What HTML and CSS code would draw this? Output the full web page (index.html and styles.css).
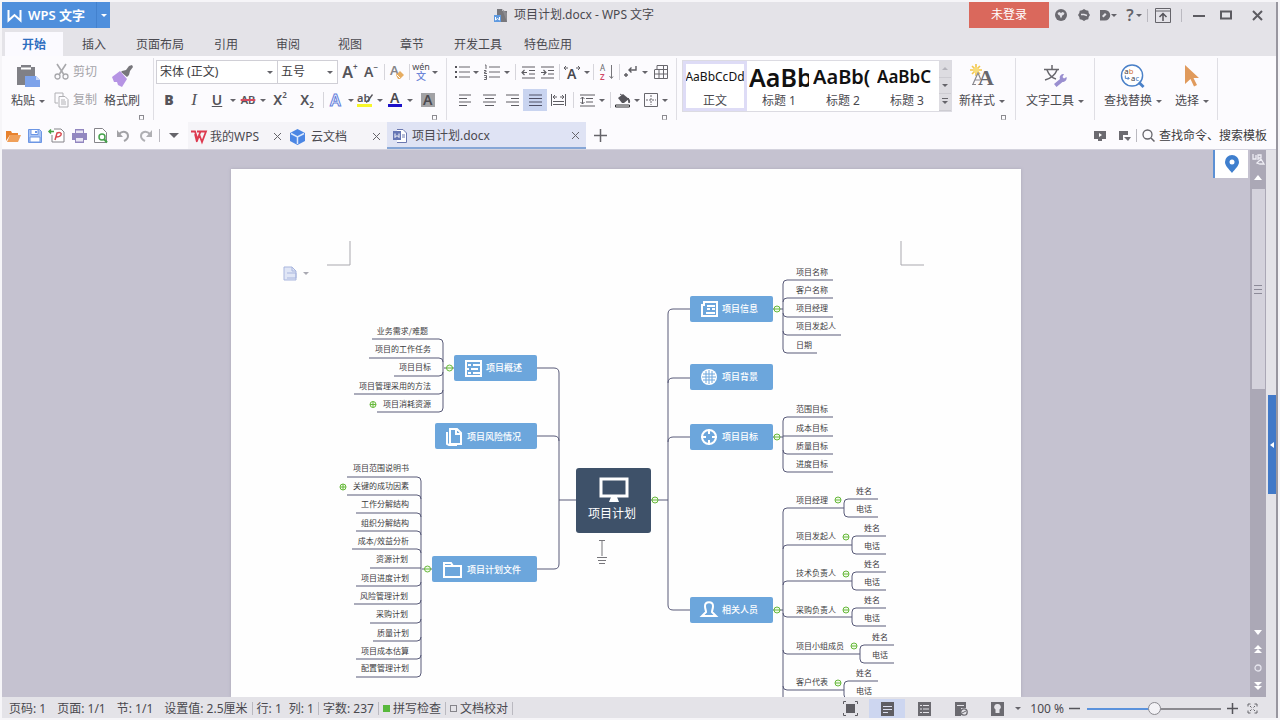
FILE: index.html
```html
<!DOCTYPE html>
<html lang="zh-CN">
<head>
<meta charset="utf-8">
<title>项目计划.docx - WPS 文字</title>
<link rel="stylesheet" href="styles.css">
</head>
<body>
<div class="window">
  <header class="titlebar">
    <button class="brand">
      <svg width="15" height="13" viewBox="0 0 15 13"><path d="M1.500 1v10.500l6-5.500 6 5.500V1" fill="none" stroke="#fff" stroke-width="2"/></svg>
      <span class="brand-name">WPS 文字</span><span class="brand-caret"><i class="caret"></i></span>
    </button>
    <div class="doc-title">
      <svg width="16" height="15" viewBox="0 0 16 15"><path d="M4 1h5v13H4zM9 3h5v11H9z" fill="#77777c"/><path d="M9 1l5 4v9" fill="#8b8b90"/><path d="M1 7h7v7H1z" fill="#5f9ae0"/><path d="M2.500 9v3l2-1.500 2 1.500V9" fill="none" stroke="#fff"/></svg>
      <span>项目计划.docx - WPS 文字</span>
    </div>
    <button class="login">未登录</button>
    <button class="w24" aria-label="皮肤"><svg width="12" height="12" viewBox="0 0 12 12"><circle cx="6" cy="6" r="6" fill="#6b6a70"/><path d="M2.500 4l2-1 1.500 1 1.500-1 2 1-1 2-1 .3L6 9.500 4.500 6.300l-1-.3z" fill="#e4e3e8"/></svg></button>
    <button class="w22" aria-label="社区"><svg width="12" height="12" viewBox="0 0 12 12"><path d="M6 0l2 1.300 2.300.4.4 2.300L12 6l-1.300 2-.4 2.300-2.300.4L6 12l-2-1.300-2.300-.4L1.300 8 0 6l1.300-2 .4-2.300L4 1.300z" fill="#6b6a70"/><path d="M3 5.500h3l3 1" stroke="#e4e3e8" stroke-width="1.500" fill="none"/></svg></button>
    <button class="w26" aria-label="文档"><svg width="12" height="12" viewBox="0 0 12 12"><path d="M1 1h5a5 5 0 0 1 0 10.500H1z" fill="#6b6a70"/><path d="M3 7l3-3 1.500 1.500-3 3z" fill="#e4e3e8"/></svg><i class="caret"></i></button>
    <button class="w26 help" aria-label="帮助">?<i class="caret"></i></button>
    <i class="vsep"></i>
    <button class="w30" aria-label="隐藏功能区"><svg width="16" height="15" viewBox="0 0 16 15"><path d="M.5.500h15v14H.5zM.5 3h15" fill="none" stroke="#65646a"/><path d="M8 13V6M4.500 9L8 5.500 11.500 9" fill="none" stroke="#55545a" stroke-width="1.500"/></svg></button>
    <i class="vsep gap-sep"></i>
    <button class="w30" aria-label="最小化"><svg width="12" height="12"><path d="M0 7h12" stroke="#5c5b61" stroke-width="2"/></svg></button>
    <button class="w24" aria-label="最大化"><svg width="12" height="11"><path d="M1 1.500h10v7H1z" fill="none" stroke="#5c5b61" stroke-width="2"/></svg></button>
    <button class="w38" aria-label="关闭"><svg width="11" height="11"><path d="M1 1l9 9M10 1l-9 9" stroke="#5c5b61" stroke-width="2"/></svg></button>
  </header>

  <nav class="menu">
    <a class="on" href="#">开始</a><a href="#">插入</a><a class="long" href="#">页面布局</a><a href="#">引用</a><a href="#">审阅</a><a href="#">视图</a><a href="#">章节</a><a class="long" href="#">开发工具</a><a class="long" href="#">特色应用</a>
  </nav>

  <section class="ribbon">
    <div class="group clip">
      <button class="big paste">
        <svg width="26" height="24" viewBox="0 0 26 24"><path d="M2 3h4V1h10v2h4v10h-7v8H2z" fill="#808086"/><path d="M6 3.500h10v2H6z" fill="#fff"/><path d="M10 12h11l4 4v7H10z" fill="#7da2ea"/><path d="M21 12v4h4z" fill="#c9d8f8"/></svg>
        <span>粘贴<i class="caret"></i></span>
      </button>
      <div class="col">
        <button class="line muted"><svg width="15" height="16" viewBox="0 0 15 16"><path d="M3 0l6.500 10M12 0L5.500 10" stroke="#a8a8ac" stroke-width="1.600"/><circle cx="3.500" cy="12.500" r="2.500" fill="none" stroke="#a8a8ac" stroke-width="1.300"/><circle cx="11.500" cy="12.500" r="2.500" fill="none" stroke="#a8a8ac" stroke-width="1.300"/></svg>剪切</button>
        <button class="line muted"><svg width="15" height="16" viewBox="0 0 15 16"><path d="M4 11H1V1h8v3M5 4.500h6l3 3V15H5zM7 8h4M7 10h5M7 12h5" fill="none" stroke="#b0b0b4"/></svg>复制</button>
      </div>
      <button class="big painter">
        <svg width="24" height="24" viewBox="0 0 24 24"><path d="M12 7l4-1 3-4 3-1 1 2-3 4-1 4-2 2-6-5z" fill="#77767b"/><path d="M10 7l7 8-5 8-4-2-1-3-3 0-2-5z" fill="#b694e4"/></svg>
        <span>格式刷</span>
      </button>
      <i class="launch"></i>
    </div>

    <div class="group font">
      <div class="row">
        <div class="pick face"><select aria-label="字体"><option>宋体 (正文)</option></select><i class="caret"></i></div>
        <div class="pick size"><select aria-label="字号"><option>五号</option></select><i class="caret"></i></div>
        <button class="w24 glyph big-a" aria-label="增大字号">A<sup>+</sup></button>
        <button class="w18 glyph small-a" aria-label="减小字号">A<sup>−</sup></button>
        <i class="rsep w8"></i>
        <button class="w18" aria-label="清除格式"><svg width="16" height="16" viewBox="0 0 16 16"><text x="1" y="11" class="ic-a13">A</text><path d="M7 11l4-4 4 4-4 4H9z" fill="#e6ad62"/><path d="M8 11l3 3" stroke="#fff"/></svg></button>
        <i class="rsep w6"></i>
        <button class="w18 pinyin" aria-label="拼音"><span>wén</span><b>文</b></button>
        <button class="w10" aria-label="更多拼音"><i class="caret"></i></button>
      </div>
      <div class="row">
        <button class="w26 glyph"><b>B</b></button><button class="w24 glyph ital">I</button><button class="w22 glyph under">U</button><button class="w10" aria-label="下划线样式"><i class="caret"></i></button><button class="w20 glyph strike">AB</button><button class="w10" aria-label="删除线样式"><i class="caret"></i></button><button class="w24 glyph">X<sup>2</sup></button><button class="w30 glyph">X<sub>2</sub></button>
        <i class="rsep w2"></i>
        <button class="w22" aria-label="文字效果"><svg width="16" height="16" viewBox="0 0 16 16"><text x="3" y="14" class="ic-outline">A</text></svg></button><button class="w10" aria-label="更多文字效果"><i class="caret"></i></button>
        <button class="w18" aria-label="突出显示"><svg width="16" height="16" viewBox="0 0 16 16"><text x="0" y="10" class="ic-ab">ab</text><path d="M9 10l6-8 1 1-5 7-2 1z" fill="#55545a"/><path d="M0 12h15v3H0z" fill="#f7f72a"/></svg></button><button class="w12" aria-label="突出显示颜色"><i class="caret"></i></button>
        <button class="w18" aria-label="字体颜色"><svg width="16" height="16" viewBox="0 0 16 16"><text x="3" y="11" class="ic-a14">A</text><path d="M1 12h14v3H1z" fill="#1c10c8"/></svg></button><button class="w12" aria-label="更多颜色"><i class="caret"></i></button>
        <button class="w24" aria-label="字符底纹"><svg width="14" height="14" viewBox="0 0 14 14"><path d="M0 0h14v14H0z" fill="#a2a2a5"/><text x="2" y="12" class="ic-a14">A</text></svg></button>
      </div>
      <i class="launch"></i>
    </div>

    <div class="group para">
      <div class="row">
        <button class="w18" aria-label="项目符号"><svg width="15" height="14" viewBox="0 0 15 14"><path d="M4 2h11M4 7h11M4 12h11" stroke="#68676d"/><path d="M0 2h2M0 7h2M0 12h2" stroke="#55545a" stroke-width="2"/></svg></button><button class="w10" aria-label="更多符号"><i class="caret"></i></button>
        <button class="w22" aria-label="编号"><svg width="16" height="16" viewBox="0 0 16 16"><path d="M5 3h11M5 8h11M5 13h11" stroke="#68676d"/><path d="M1 1h1v4M0 6.500h2v1.500h-1.500v1.500H3M0 11.500h2.500v4H0M.5 13.500h2" fill="none" stroke="#68676d"/></svg></button><button class="w8" aria-label="更多编号"><i class="caret"></i></button>
        <i class="rsep w8"></i>
        <button class="w18" aria-label="减少缩进"><svg width="13" height="13" viewBox="0 0 13 13"><path d="M0 1h13M7 4.500h6M7 8h6M0 12h13M0 6.500h5M2.500 4L0 6.500 2.500 9" fill="none" stroke="#5e5d63" stroke-width="1.200"/></svg></button>
        <button class="w20" aria-label="增加缩进"><svg width="13" height="13" viewBox="0 0 13 13"><path d="M0 1h13M7 4.500h6M7 8h6M0 12h13M0 6.500h5M2.500 4L5 6.500 2.500 9" fill="none" stroke="#5e5d63" stroke-width="1.200"/></svg></button>
        <i class="rsep w4"></i>
        <button class="w22" aria-label="中文版式"><svg width="16" height="15" viewBox="0 0 16 15"><text x="3" y="14" class="ic-a14">A</text><path d="M0 3h4M2 1L0 3l2 2M16 3h-4M14 1l2 2-2 2" fill="none" stroke="#5e5d63"/></svg></button><button class="w8" aria-label="更多版式"><i class="caret"></i></button>
        <i class="rsep w4"></i>
        <button class="w22" aria-label="排序"><svg width="15" height="16" viewBox="0 0 15 16"><text x="1" y="7" class="ic-sa">A</text><text x="1" y="16" class="ic-sz">Z</text><path d="M12.500 1v13M10.500 12l2 2.500 1.500-2" fill="none" stroke="#77767b"/></svg></button>
        <i class="rsep w4"></i>
        <button class="w20" aria-label="换行符"><svg width="14" height="14" viewBox="0 0 14 14"><path d="M12 1v4H5M7.500 2.500L5 5l2.500 2.500M2 8v4M0 10h4" fill="none" stroke="#5e5d63" stroke-width="1.400"/></svg></button><button class="w8" aria-label="更多换行"><i class="caret"></i></button>
        <button class="w24" aria-label="表格"><svg width="14" height="14" viewBox="0 0 14 14"><path d="M3 .5h10.500v13H.5V5M3 .5v4H.5M3 4.500h10.500M.5 9h13M5 4.500v9M9.500.5v13" fill="none" stroke="#68676d"/></svg></button>
      </div>
      <div class="row">
        <button class="w24" aria-label="左对齐"><svg width="13" height="12"><path d="M0 1h12M0 4.500h8M0 8h12M0 11.500h8" stroke="#5e5d63"/></svg></button>
        <button class="w24" aria-label="居中"><svg width="13" height="12"><path d="M0 1h13M2 4.500h9M0 8h13M2 11.500h9" stroke="#5e5d63"/></svg></button>
        <button class="w22" aria-label="右对齐"><svg width="13" height="12"><path d="M0 1h13M5 4.500h8M0 8h13M5 11.500h8" stroke="#5e5d63"/></svg></button>
        <button class="w24 pressed" aria-label="两端对齐"><svg width="13" height="12"><path d="M0 1h13M0 4.500h13M0 8h13M0 11.500h13" stroke="#4f5066"/></svg></button>
        <button class="w22" aria-label="分散对齐"><svg width="15" height="12"><path d="M.5 0v12M14.500 0v12M2 3h4M13 3H9M4 1L2 3l2 2M11 1l2 2-2 2M2 7.500h11M2 10.500h11" fill="none" stroke="#5e5d63"/></svg></button>
        <i class="rsep w8"></i>
        <button class="w20" aria-label="行距"><svg width="15" height="13"><path d="M0 1h15M6 4.500h7M6 8h7M0 12h15M2.500 3v7M.5 5l2-2 2 2M.5 8l2 2 2-2" fill="none" stroke="#5e5d63"/></svg></button><button class="w10" aria-label="更多行距"><i class="caret"></i></button>
        <i class="rsep w6"></i>
        <button class="w20" aria-label="底纹"><svg width="16" height="15" viewBox="0 0 16 15"><path d="M3 5l5-4 6 5-5 4-2 0z" fill="#55545a"/><path d="M13 5c2 2 2 4 1 5zM5 1l3 2" fill="#55545a" stroke="#55545a"/><path d="M.5 12h14v2H.5z" fill="#fff" stroke="#2c2c30"/></svg></button><button class="w8" aria-label="底纹颜色"><i class="caret"></i></button>
        <button class="w20" aria-label="边框"><svg width="14" height="14" viewBox="0 0 14 14"><path d="M.5.500h13v13H.5z" fill="none" stroke="#68676d"/><path d="M7 2v10M2 7h10" stroke="#68676d" stroke-dasharray="2 1"/></svg></button><button class="w8" aria-label="更多边框"><i class="caret"></i></button>
      </div>
      <i class="launch"></i>
    </div>

    <div class="group styles">
      <div class="gallery">
        <button class="style chosen"><span class="s0">AaBbCcDd</span><em>正文</em></button>
        <button class="style"><span class="s1">AaBb</span><em>标题 1</em></button>
        <button class="style"><span class="s2">AaBb(</span><em>标题 2</em></button>
        <button class="style"><span class="s3">AaBbC</span><em>标题 3</em></button>
        <div class="gscroll"><button aria-label="上翻"><i class="caret up"></i></button><button aria-label="下翻"><i class="caret"></i></button><button aria-label="展开"><i class="caret bar"></i></button></div>
      </div>
      <button class="big newstyle">
        <svg width="24" height="24" viewBox="0 0 24 24"><path d="M6 0v12M0 6h12M2 2l8 8M10 2l-8 8" stroke="#f3c64a" stroke-width="1.600"/><circle cx="6" cy="6" r="3" fill="#f8dc7c"/><path d="M3 20l5-11 3 7M5 16h5M2 20.500h4" fill="none" stroke="#8b8a90" stroke-width="1.200"/><text x="8" y="21" class="ic-serif">A</text></svg>
        <span>新样式<i class="caret"></i></span>
      </button>
      <i class="launch"></i>
    </div>

    <div class="group tools">
      <button class="big">
        <svg width="24" height="24" viewBox="0 0 24 24"><path d="M9 1v4M1 5.500h15M4 6c2 5 5 8 9 9M14 6c-2 5-5 8-12 10" fill="none" stroke="#68676d" stroke-width="1.500"/><path d="M11 20l6-5c-1-3 1-5 4-5l-1.500 3 1.500 1.500 2.500-1.500c1 3-2 5-4 5l-6 5z" fill="#9a8fd0"/></svg>
        <span>文字工具<i class="caret"></i></span>
      </button>
    </div>
    <div class="group find">
      <button class="big">
        <svg width="26" height="25" viewBox="0 0 26 25"><circle cx="12" cy="12" r="11" fill="#fff" stroke="#4a80c8" stroke-width="1.500"/><path d="M19 19l5 5" stroke="#4a80c8" stroke-width="3"/><text x="4" y="10" class="ic-find">a<tspan fill="#d4763c">b</tspan></text><text x="11" y="18" class="ic-find">a<tspan fill="#4a80c8">c</tspan></text><path d="M5 12v3h4M7.500 13.500L9 15l-1.500 1.500" fill="none" stroke="#4a80c8"/></svg>
        <span>查找替换<i class="caret"></i></span>
      </button>
      <button class="big">
        <svg width="16" height="24" viewBox="0 0 16 24"><path d="M1 1l14 13H9.500l3.500 7-3 1.500L6.500 15 1 20z" fill="#e09a5c"/></svg>
        <span>选择<i class="caret"></i></span>
      </button>
    </div>
  </section>

  <section class="tabs">
    <div class="quick">
      <button aria-label="打开"><svg width="16" height="14" viewBox="0 0 16 14"><path d="M1 12V2h5l1 2h6v2H5z" fill="#e8822e"/><path d="M5 6h11l-3 7H2z" fill="#f0a05a"/></svg></button>
      <button aria-label="保存"><svg width="14" height="14" viewBox="0 0 14 14"><path d="M.5.500h11l2 2v11H.5z" fill="#a9c4f4" stroke="#6c96e4"/><path d="M3 .5h7v5H3zM2 8h10v5H2z" fill="#fff" stroke="#6c96e4"/><path d="M8 2v2" stroke="#6c96e4" stroke-width="2"/></svg></button>
      <button aria-label="输出为PDF"><svg width="16" height="15" viewBox="0 0 16 15"><path d="M5 1h7l3 3v10H3V7" fill="#fff" stroke="#85848a"/><path d="M6 12l2-7c3-1 5 0 4 2s-3 2-5 2" fill="none" stroke="#d84a50" stroke-width="1.500"/><path d="M0 3.500h5M2 1.500l-2 2 2 2" fill="none" stroke="#46a246" stroke-width="1.500"/></svg></button>
      <button aria-label="打印"><svg width="15" height="14" viewBox="0 0 15 14"><path d="M3 0h9v4h3v7h-3v3H3v-3H0V4h3z" fill="#9287c0"/><path d="M4 1.500h7V4H4zM4 9h7v3.500H4z" fill="#e9e6f4"/></svg></button>
      <button aria-label="打印预览"><svg width="14" height="15" viewBox="0 0 14 15"><path d="M.5.500h8l4 4v10H.5z" fill="#fff" stroke="#85848a"/><circle cx="8" cy="9" r="3" fill="#fff" stroke="#46a24c" stroke-width="1.500"/><path d="M10 11l3 3.500" stroke="#46a24c" stroke-width="2"/></svg></button>
      <button aria-label="撤销"><svg width="13" height="13" viewBox="0 0 13 13"><path d="M2 5c4-4 9-2 9 2 0 2-2 4-4 5" fill="none" stroke="#a2a2a6" stroke-width="2"/><path d="M0 1v7h6z" fill="#a2a2a6"/></svg></button>
      <button aria-label="恢复"><svg width="13" height="13" viewBox="0 0 13 13"><path d="M11 5c-4-4-9-2-9 2 0 2 2 4 4 5" fill="none" stroke="#b0b0b4" stroke-width="2"/><path d="M13 1v7H7z" fill="#b0b0b4"/></svg></button>
    </div>
    <i class="vsep"></i>
    <button class="w28" aria-label="自定义"><i class="caret lg"></i></button>
    <div class="doc home">
      <svg width="16" height="14" viewBox="0 0 16 14"><path d="M0 1.500h4l2.500 8 3-8M6 1.500h9L11 12 8 4M4 4l2 8" fill="none" stroke="#dd3a50" stroke-width="1.800"/></svg><span>我的WPS</span><button aria-label="关闭"><svg width="9" height="9"><path d="M1 1l7 7M8 1L1 8" stroke="#65646a"/></svg></button>
    </div>
    <div class="doc cloud">
      <svg width="15" height="16" viewBox="0 0 15 16"><path d="M7.500 0L15 4v8l-7.500 4L0 12V4z" fill="#4b86e4"/><path d="M1 4.500L7.500 8 14 4.500M7.500 8v7" fill="none" stroke="#dce8fc" stroke-width="1.500"/></svg><span>云文档</span><button aria-label="关闭"><svg width="9" height="9"><path d="M1 1l7 7M8 1L1 8" stroke="#65646a"/></svg></button>
    </div>
    <div class="doc current">
      <svg width="14" height="14" viewBox="0 0 14 14"><path d="M4 .5h6l3.500 3.500v9.500H4" fill="#fff" stroke="#6b78b0"/><path d="M0 2h8v9H0z" fill="#6676b4"/><path d="M2 4.500v4l2-2 2 2v-4" fill="none" stroke="#fff"/><path d="M9 6h3M9 8h3" stroke="#6b78b0"/></svg><span>项目计划.docx</span><button aria-label="关闭"><svg width="9" height="9"><path d="M1 1l7 7M8 1L1 8" stroke="#65646a"/></svg></button>
    </div>
    <button class="w28" aria-label="新建"><svg width="13" height="13"><path d="M6.500 0v13M0 6.500h13" stroke="#65646a" stroke-width="1.500"/></svg></button>
    <div class="search">
      <button class="w24" aria-label="演示"><svg width="12" height="12" viewBox="0 0 12 12"><path d="M0 1h12v8H8v2H4V9H0z" fill="#6b6a70"/><path d="M5 3l3 2-3 2z" fill="#fff"/></svg></button>
      <button class="w24" aria-label="窗口"><svg width="13" height="12" viewBox="0 0 13 12"><path d="M1 1h9v4H5v5H1z" fill="#6b6a70"/><path d="M6 7h7l-3 4z" fill="#6b6a70"/></svg></button>
      <i class="vsep"></i>
      <svg width="13" height="13" viewBox="0 0 13 13"><circle cx="5.500" cy="5.500" r="4.500" fill="none" stroke="#65646a" stroke-width="1.300"/><path d="M9 9l3.500 3.500" stroke="#65646a" stroke-width="1.500"/></svg>
      <input type="text" aria-label="搜索" value="查找命令、搜索模板">
    </div>
  </section>

  <main class="work">
    <div class="canvas">
      <article class="paper">
        <svg class="map" viewBox="0 0 790 528" width="790" height="528">
          <g transform="translate(-231 -169)">
            <path class="crop" d="M327 265h23v-24M924 265h-23v-24"/>
            <path d="M284 267h8l4 4v9h-12z" fill="#e0e6f6" stroke="#a9b6de"/><path d="M287 273h9v5h-9M292 267v4h4" fill="none" stroke="#a9b6de"/><path d="M303 272h6l-3 3z" fill="#a9a9b2"/>

            <g class="wire">
              <path d="M537 368h17q5 0 5 5v191q0 5-5 5h-17M537 436h17q5 0 5 5M559 500h17"/>
              <path d="M651 500h17M690 309h-17q-5 0-5 5v291q0 5 5 5h17M690 378h-17q-5 0-5 5M690 437h-17q-5 0-5 5"/>
              <path d="M454 368h-10M372 339h67q4 0 4 4v65q0 4-4 4h-62M369 358h70q4 0 4 4M394 376h45q4 0 4-4M354 394h85q4 0 4-4"/>
              <path d="M432 569h-10M347 477h70q4 0 4 4v192q0 4-4 4h-61M347 495h70q4 0 4 4M356 513h61q4 0 4 4M356 531h61q4 0 4 4M352 549h65q4 0 4 4M370 568h51M356 586h61q4 0 4-4M354 604h63q4 0 4-4M370 623h47q4 0 4-4M373 641h44q4 0 4-4M356 659h61q4 0 4-4"/>
              <path d="M773 309h10M833 280h-46q-4 0-4 4v65q0 4 4 4h30M833 298h-46q-4 0-4 4M833 317h-46q-4 0-4-4M841 335h-54q-4 0-4-4"/>
              <path d="M773 437h10M833 417h-46q-4 0-4 4v47q0 4 4 4h46M833 436h-50M833 454h-46q-4 0-4-4"/>
              <path d="M773 610h10M844 508h-57q-4 0-4 4v185M852 545h-65q-4 0-4 4M852 581h-65q-4 0-4 4M852 617h-65q-4 0-4-4M860 654h-73q-4 0-4-4M844 690h-57q-4 0-4-4"/>
            </g>

            <g class="box">
              <rect x="454" y="355" width="83" height="26" rx="2"/><rect x="435" y="423" width="102" height="26" rx="2"/><rect x="432" y="556" width="105" height="26" rx="2"/>
              <rect x="690" y="296" width="83" height="26" rx="2"/><rect x="690" y="364" width="83" height="26" rx="2"/><rect x="690" y="424" width="83" height="26" rx="2"/><rect x="690" y="597" width="83" height="26" rx="2"/>
            </g>
            <rect class="root" x="576" y="468" width="75" height="65" rx="3"/>

            <g class="pic">
              <path d="M466 361h15v15h-15zM468 365h3M473 365h8M466 369h3M471 369h7M468 373h3M473 373h8"/>
              <path d="M450 429h7l4 4v11h-11zM456 429v5h5M447 432v12l2 1h8"/>
              <path d="M444 563h7l2 3h8v11h-17zM444 566h9"/>
              <path d="M704 302h13v14h-15v-11h2zM707 306h8M707 309h3M712 309h3M706 313h9"/>
              <circle cx="709" cy="377" r="8" class="solid"/><path class="grid" d="M703 374h12M702 377h14M703 380h12M706 371v12M709 370v14M712 371v12"/>
              <circle cx="709" cy="437" r="7"/><path d="M709 429v5M709 440v5M701 437h5M712 437h5"/>
              <path d="M706 612c0-2-1-3-1-6 0-5 8-5 8 0 0 3-1 4-1 6l4 4h-14z"/>
            </g>
            <path d="M601 479h26v17h-26z" fill="none" stroke="#fff" stroke-width="3"/><path d="M611 497h6l2 5h-10z" fill="#fff"/>

            <g class="topic">
              <text x="486" y="371">项目概述</text><text x="467" y="440">项目风险情况</text><text x="467" y="573">项目计划文件</text>
              <text x="722" y="312">项目信息</text><text x="722" y="380">项目背景</text><text x="722" y="440">项目目标</text><text x="722" y="613">相关人员</text>
            </g>
            <text class="root-name" x="612" y="518">项目计划</text>

            <g class="leaf end">
              <text x="428" y="334">业务需求/难题</text><text x="431" y="352">项目的工作任务</text><text x="431" y="370">项目目标</text><text x="431" y="389">项目管理采用的方法</text><text x="431" y="407">项目消耗资源</text>
              <text x="409" y="471">项目范围说明书</text><text x="409" y="489">关键的成功因素</text><text x="409" y="507">工作分解结构</text><text x="409" y="526">组织分解结构</text><text x="409" y="544">成本/效益分析</text><text x="408" y="562">资源计划</text><text x="409" y="581">项目进度计划</text><text x="408" y="599">风险管理计划</text><text x="408" y="617">采购计划</text><text x="409" y="636">质量计划</text><text x="409" y="654">项目成本估算</text><text x="409" y="671">配置管理计划</text>
            </g>
            <g class="leaf">
              <text x="796" y="275">项目名称</text><text x="796" y="293">客户名称</text><text x="796" y="311">项目经理</text><text x="796" y="329">项目发起人</text><text x="796" y="348">日期</text>
              <text x="796" y="412">范围目标</text><text x="796" y="431">成本目标</text><text x="796" y="449">质量目标</text><text x="796" y="467">进度目标</text>
              <text x="796" y="503">项目经理</text><text x="796" y="539">项目发起人</text><text x="796" y="576">技术负责人</text><text x="796" y="613">采购负责人</text><text x="796" y="649">项目小组成员</text><text x="796" y="685">客户代表</text>
              <g transform="translate(844 508)"><path class="fork" d="M34-9H4q-4 0-4 4v10q0 4 4 4h30"/><text x="12" y="-14">姓名</text><text x="12" y="4">电话</text></g>
              <g transform="translate(852 545)"><path class="fork" d="M34-9H4q-4 0-4 4v10q0 4 4 4h30"/><text x="12" y="-14">姓名</text><text x="12" y="4">电话</text></g>
              <g transform="translate(852 581)"><path class="fork" d="M34-9H4q-4 0-4 4v10q0 4 4 4h30"/><text x="12" y="-14">姓名</text><text x="12" y="4">电话</text></g>
              <g transform="translate(852 617)"><path class="fork" d="M34-9H4q-4 0-4 4v10q0 4 4 4h30"/><text x="12" y="-14">姓名</text><text x="12" y="4">电话</text></g>
              <g transform="translate(860 654)"><path class="fork" d="M34-9H4q-4 0-4 4v10q0 4 4 4h30"/><text x="12" y="-14">姓名</text><text x="12" y="4">电话</text></g>
              <g transform="translate(844 690)"><path class="fork" d="M34-9H4q-4 0-4 4v10q0 4 4 4h30"/><text x="12" y="-14">姓名</text><text x="12" y="4">电话</text></g>
            </g>

            <g class="knob">
              <path d="M446.500 368a3 3 0 1 0 6 0a3 3 0 1 0-6 0h6"/><path d="M424.500 569a3 3 0 1 0 6 0a3 3 0 1 0-6 0h6"/><path d="M652 500a3 3 0 1 0 6 0a3 3 0 1 0-6 0h6"/>
              <path d="M774 309a3 3 0 1 0 6 0a3 3 0 1 0-6 0h6"/><path d="M774 437a3 3 0 1 0 6 0a3 3 0 1 0-6 0h6"/><path d="M774 610a3 3 0 1 0 6 0a3 3 0 1 0-6 0h6"/>
              <path d="M835 500a3 3 0 1 0 6 0a3 3 0 1 0-6 0h6"/><path d="M843 537a3 3 0 1 0 6 0a3 3 0 1 0-6 0h6"/><path d="M843 574a3 3 0 1 0 6 0a3 3 0 1 0-6 0h6"/><path d="M843 610a3 3 0 1 0 6 0a3 3 0 1 0-6 0h6"/><path d="M851 646a3 3 0 1 0 6 0a3 3 0 1 0-6 0h6"/><path d="M835 683a3 3 0 1 0 6 0a3 3 0 1 0-6 0h6"/>
              <path d="M370 404.500a3 3 0 1 0 6 0a3 3 0 1 0-6 0h6M373 401.500v6"/><path d="M340 487a3 3 0 1 0 6 0a3 3 0 1 0-6 0h6M343 484v6"/>
            </g>
            <path d="M599 540.500h6M602 541v15M597 557.500h10M598 560.500h8M599 563.500h6" fill="none" stroke="#77767b"/>
          </g>
        </svg>
      </article>
      <button class="pin" aria-label="定位"><svg width="14" height="18" viewBox="0 0 14 18"><path d="M7 0a7 7 0 0 1 7 7c0 4-4 7-7 11C4 14 0 11 0 7a7 7 0 0 1 7-7z" fill="#3f7fce"/><circle cx="7" cy="7" r="2.500" fill="#fff"/></svg></button>
    </div>
    <div class="vscroll">
      <svg width="12" height="11" viewBox="0 0 12 11"><path d="M1 0v5h3V1M6 6V1h3v3M6 4h3" fill="none" stroke="#eeedf4" stroke-width="1.300"/><path d="M5 9l4-4 3 5H8z" fill="none" stroke="#eeedf4" stroke-width="1.300"/></svg>
      <svg width="8" height="5"><path d="M0 5l4-5 4 5z" fill="#fff"/></svg>
      <div class="track"><div class="thumb"><svg width="8" height="11"><path d="M0 1.500h8M0 5.500h8M0 9.500h8" stroke="#8c8a98"/></svg></div></div>
      <svg width="8" height="5"><path d="M0 0h8L4 5z" fill="#fff"/></svg>
      <svg width="8" height="9"><path d="M0 4l4-4 4 4zM0 8l4-4 4 4z" fill="#fff"/></svg>
      <svg width="8" height="8"><circle cx="4" cy="4" r="3" fill="none" stroke="#e6e5ee" stroke-width="1.300"/></svg>
      <svg width="8" height="9"><path d="M0 0h8L4 4zM0 4h8L4 8z" fill="#fff"/></svg>
    </div>
    <aside class="side"><button aria-label="展开侧栏"><svg width="4" height="6"><path d="M4 0v6L0 3z" fill="#fff"/></svg></button></aside>
  </main>

  <footer class="status">
    <span class="s-page">页码: 1</span><span class="s-page">页面: 1/1</span><span class="s-page">节: 1/1</span><span>设置值: 2.5厘米</span>
    <i class="vsep"></i><span class="s-row">行: 1</span><span>列: 1</span><i class="vsep"></i><span>字数: 237</span><i class="vsep"></i>
    <label><input type="checkbox" class="tick" checked>拼写检查</label><i class="vsep"></i>
    <label><input type="checkbox" class="tick">文档校对</label><i class="vsep"></i>
    <div class="views">
      <button class="w38" aria-label="全屏"><svg width="15" height="15"><path d="M3 3h9v9H3z" fill="#5e5d63"/><path d="M.5 3V.5H3M12 .5h2.500V3M14.500 12v2.500H12M3 14.500H.5V12" fill="none" stroke="#5e5d63"/></svg></button>
      <button class="w36 lit" aria-label="页面视图"><svg width="13" height="14"><path d="M0 0h13v14H0z" fill="#5e5d63"/><path d="M2 4.500h9M2 7.500h9M2 10.500h5" stroke="#dcdff0"/></svg></button>
      <button class="w38" aria-label="大纲"><svg width="13" height="14"><path d="M0 0h13v14H0z" fill="#6b6a70"/><path d="M2 3.500h2M5 3.500h6M2 7h2M5 7h6M2 10.500h2M5 10.500h6" stroke="#e4e3e8"/></svg></button>
      <button class="w36" aria-label="网页视图"><svg width="13" height="14"><path d="M0 0h11v6H6v8H0z" fill="#6b6a70"/><path d="M2 3.500h7" stroke="#e4e3e8"/><circle cx="9" cy="10" r="3.200" fill="#e4e3e8" stroke="#6b6a70" stroke-width="1.300"/><path d="M7 11l4-2" stroke="#6b6a70"/></svg></button>
      <button class="w36" aria-label="护眼"><svg width="13" height="14"><path d="M0 0h13v14H0z" fill="#6b6a70"/><path d="M6.500 2a3 3 0 0 1 2 5.500V11h-4V7.500a3 3 0 0 1 2-5.500z" fill="#e4e3e8"/></svg></button>
      <i class="caret"></i>
      <span class="pct">100 %</span>
      <button class="w20" aria-label="缩小"><svg width="11" height="11"><path d="M0 5.500h11" stroke="#55545a" stroke-width="1.500"/></svg></button>
      <input type="range" class="zoom" aria-label="缩放" min="0" max="100" value="50">
      <button class="w20" aria-label="放大"><svg width="11" height="11"><path d="M0 5.500h11M5.500 0v11" stroke="#55545a" stroke-width="1.500"/></svg></button>
      <button class="w20" aria-label="适应"><svg width="11" height="11"><path d="M1 3.500V1h2.500M7.500 1H10v2.500M10 7.500V10H7.500M3.500 10H1V7.500M3 3l1.500 1.500M8 3L6.500 4.500M3 8l1.500-1.500M8 8L6.500 6.500" fill="none" stroke="#65646a"/></svg></button>
    </div>
  </footer>
</div>
</body>
</html>
```

FILE: styles.css
```css
* { box-sizing: border-box; }
html, body { height: 100%; }
body {
  margin: 0;
  padding: 2px 2px 2px 2px;
  background: #f6f5f8;
  color: #4a494f;
  font: 12px/16px "Noto Sans", "Noto Sans CJK SC", sans-serif;
  overflow: hidden;
}
button {
  display: flex; align-items: center; justify-content: center;
  flex: none;
  padding: 0; border: 0; background: none;
  color: inherit; font: inherit; white-space: nowrap;
}
svg { display: block; flex: none; overflow: visible; }
i, em { font-style: normal; }

.window { display: flex; flex-direction: column; height: 100%; background: #e4e3e8; border-right: 2px solid #98969f; }

.w2 { width: 2px; } .w4 { width: 4px; } .w6 { width: 6px; } .w8 { width: 8px; }
.w10 { width: 10px; } .w12 { width: 12px; } .w18 { width: 18px; } .w20 { width: 20px; }
.w22 { width: 22px; } .w24 { width: 24px; } .w26 { width: 26px; } .w28 { width: 28px; }
.w30 { width: 30px; } .w36 { width: 36px; } .w38 { width: 38px; }

.caret { display: inline-block; flex: none; border: 3px solid transparent; border-top-color: #65646a; border-bottom-width: 0; }
.caret.lg { border-width: 5px 5px 0; }
.caret.up { border-width: 0 3px 3px; border-color: transparent transparent #b4b3bb; }
.caret.bar { position: relative; }
.caret.bar::before { content: ""; position: absolute; left: -3px; top: -6px; width: 6px; height: 1px; background: #65646a; }
.vsep { flex: none; width: 1px; height: 13px; background: #bab9c0; }

/* title bar */
.titlebar { display: flex; flex: none; align-items: center; height: 26px; }
.titlebar > button { height: 26px; }
.titlebar > .brand { background: #4f8fdc; color: #fff; }
.brand svg { margin-left: 5px; }
.brand-name { padding-left: 6px; width: 74px; text-align: left; font-size: 13px; font-weight: 600; }
.brand-caret { display: flex; align-items: center; justify-content: center; width: 14px; height: 26px; border-left: 1px solid #4381ce; }
.brand .caret { border-top-color: #fff; }
.doc-title { display: flex; flex: 1; align-items: center; justify-content: center; gap: 5px; padding-left: 68px; white-space: nowrap; }
.titlebar > .login { width: 80px; background: #da685c; color: #fff; }
.help { font-size: 16px; gap: 2px; font-weight: 600; color: #65646a; }
.gap-sep { margin: 0 2px 0 3px; }

/* menu */
.menu { display: flex; flex: none; padding: 4px 0 0 3px; }
.menu a { width: 62px; padding: 5px 0 3px; text-align: center; color: #4a494f; text-decoration: none; }
.menu a.long { width: 70px; }
.menu a.on { width: 58px; background: #fbfaff; color: #2f6fc0; font-weight: 600; }

/* ribbon */
.ribbon { display: flex; flex: none; padding: 2px 0; background: #fcfbfe; }
.group { position: relative; display: flex; padding: 0 3px 0 5px; height: 62px; border-right: 1px solid #dfdee4; }
.launch { position: absolute; right: 9px; bottom: 0; width: 5px; height: 5px; border: 1px solid #8b8a90; border-bottom-color: #c0c0c4; }
.big { flex-direction: column; justify-content: flex-start; height: 56px; padding-top: 6px; }
.big svg { height: 24px; }
.big span { display: flex; align-items: center; gap: 4px; margin-top: 5px; }
.clip { width: 152px; padding: 0; }
.paste { width: 52px; }
.col { display: flex; flex-direction: column; }
.line { height: 28px; width: 43px; gap: 4px; }
.muted { color: #a4a3a8; }
.painter { width: 50px; }
.font, .para { flex-direction: column; }
.font { width: 293px; padding: 0 0 0 2px; }
.para { width: 230px; padding: 0 0 0 6px; }
.row { display: flex; align-items: center; height: 28px; }
.row button { height: 22px; }
.rsep { flex: none; height: 16px; background: linear-gradient(#d6d5db, #d6d5db) center / 1px 100% no-repeat; }
.pick { display: flex; flex: none; align-items: center; height: 24px; padding-right: 4px; border: 1px solid #d0cfd6; background: #fff; }
.pick select { appearance: none; flex: 1; min-width: 0; padding: 0 3px; border: 0; background: none; color: #3c3b40; font: inherit; }
.face { width: 122px; } .size { width: 61px; margin-left: -1px; }
.glyph { font-size: 14px; font-weight: 600; color: #55545a; }
.glyph sup, .glyph sub { font-size: 8px; line-height: 8px; }
.glyph sup { align-self: flex-start; padding-top: 2px; } .glyph sub { align-self: flex-end; padding-bottom: 2px; }
.big-a { font-size: 16px; }
.ital { font-family: "Liberation Serif", serif; font-style: italic; font-size: 17px; font-weight: 400; }
.under { text-decoration: underline; }
.strike { font-size: 11px; text-decoration: line-through #d84a60 2px; }
.pinyin { flex-direction: column; font-size: 9px; line-height: 8px; }
.pinyin b { color: #6c84d8; font-size: 10px; line-height: 11px; font-weight: 500; }
.row .pressed { background: #c9d4f0; }
.ic-a13 { font-size: 13px; font-weight: 600; fill: #85848a; }
.ic-a14 { font-size: 14px; font-weight: 600; fill: #4a494f; }
.ic-ab { font-size: 11px; font-weight: 600; fill: #55545a; }
.ic-outline { font-size: 16px; font-weight: 600; fill: #fff; stroke: #6480dc; }
.ic-sa { font-size: 8px; fill: #68676d; } .ic-sz { font-size: 8px; font-weight: 600; fill: #d04868; }
.ic-serif { font-family: "Liberation Serif", serif; font-size: 22px; font-weight: 700; fill: #68676d; }
.ic-find { font-size: 8px; fill: #3c3b40; }

.styles { width: 339px; }
.gallery { display: flex; margin-top: 2px; height: 52px; border: 1px solid #dcdbe2; background: #fff; }
.style { flex-direction: column; justify-content: flex-end; width: 64px; overflow: hidden; }
.style span { display: flex; align-items: center; justify-content: flex-start; height: 32px; overflow: hidden; color: #111; font-weight: 600; }
.style em { height: 18px; }
.chosen { outline: 3px solid #dedcf6; outline-offset: -3px; }
.style .s0 { font-size: 12px; font-weight: 400; }
.style .s1, .style .s2, .style .s3 { width: 60px; }
.s1 { font-size: 25px; } .s2 { font-size: 20px; } .s3 { font-size: 17px; }
.gscroll { display: flex; flex-direction: column; width: 12px; background: #dddce1; }
.gscroll button { flex: 1; width: 12px; border-bottom: 1px solid #cdccd2; }
.newstyle { width: 60px; }
.tools { width: 79px; padding: 0; justify-content: center; }
.find { width: 123px; padding: 0; }
.find .big { width: 42px; } .find .big:first-child { width: 76px; }

/* document tabs */
.tabs { display: flex; flex: none; align-items: center; height: 28px; background: #fcfbfe; border-bottom: 1px solid #d4d3de; }
.quick { display: flex; width: 157px; }
.quick button { width: 22px; height: 22px; }
.doc { display: flex; align-items: center; gap: 5px; height: 27px; padding: 2px 6px 0; background: #f5f4f8; }
.doc span { flex: 1; color: #4a494f; }
.home { gap: 3px; width: 98px; padding: 2px 4px 0 3px; }
.cloud { gap: 6px; width: 101px; padding: 2px 6px 0 4px; }
.current { width: 199px; background: #dfe3f4; border-bottom: 2px solid #86a6d6; }
.search { display: flex; align-items: center; margin-left: auto; padding-right: 7px; }
.search > svg { margin: 0 4px 0 5px; }
.search input { width: 110px; padding: 1px 0 0; border: 0; background: none; color: #3c3b40; font: inherit; }

/* workspace */
.work { display: flex; flex: 1; min-height: 0; }
.canvas { position: relative; display: flex; flex: 1; justify-content: center; padding-top: 19px; overflow: hidden; background: #c5c2d0; }
.paper { flex: none; width: 790px; background: #fefefe; box-shadow: 0 0 3px #aaa8b6; }
.pin { position: absolute; top: 0; right: 2px; width: 35px; height: 28px; background: #fff; border-left: 2px solid #5c90d4; }
.vscroll { display: flex; flex: none; flex-direction: column; align-items: center; gap: 10px; width: 16px; padding: 4px 0 6px; background: #aba8b6; }
.track { flex: 1; margin-top: -1px; }
.thumb { display: flex; align-items: center; justify-content: center; width: 13px; height: 200px; background: #d4d2dc; }
.side { display: flex; flex: none; flex-direction: column; justify-content: center; width: 10px; padding: 42px 0 0 2px; }
.side button { width: 8px; height: 99px; background: #4179c8; }

.map { overflow: hidden; font-family: "Noto Sans CJK SC", sans-serif; }
.crop { fill: none; stroke: #a9a8ae; }
.wire, .fork { fill: none; stroke: #585a78; stroke-width: 1; }
.box { fill: #6ca6dc; }
.root { fill: #3e5169; }
.pic { fill: none; stroke: #fff; stroke-width: 2; }
.pic .solid { fill: #fff; stroke: none; } .pic .grid { stroke: #6ca6dc; stroke-width: 1; }
.topic { font-size: 9px; font-weight: 500; fill: #fff; }
.root-name { font-size: 12px; fill: #fff; text-anchor: middle; }
.leaf { font-size: 8px; fill: #3c3b40; }
.leaf.end { text-anchor: end; }
.knob { fill: #f2fbe9; stroke: #67b83c; }

/* status bar */
.status { display: flex; flex: none; align-items: center; gap: 4px; height: 21px; padding: 2px 0 0 7px; white-space: nowrap; }
.s-page { margin-right: 7px; } .s-row { margin-right: 3px; }
.status label { display: flex; align-items: center; gap: 3px; }
.tick { appearance: none; width: 7px; height: 7px; margin: 0; border: 1px solid #85848a; }
.tick:checked { border-color: #58b83c; background: #58b83c; }
.views { display: flex; align-items: center; margin-left: auto; padding-right: 14px; }
.views button { height: 19px; }
.lit { background: #cdd6f0; }
.pct { margin: 0 0 0 9px; }
.zoom { appearance: none; width: 134px; height: 14px; margin: 0 1px 0 3px; background: linear-gradient(90deg, #5b92dc 50%, #8b8a90 50%) center / 100% 2px no-repeat; }
.zoom::-webkit-slider-thumb { appearance: none; width: 13px; height: 13px; border: 1px solid #8b8a90; border-radius: 50%; background: #f3f2f6; }
```
